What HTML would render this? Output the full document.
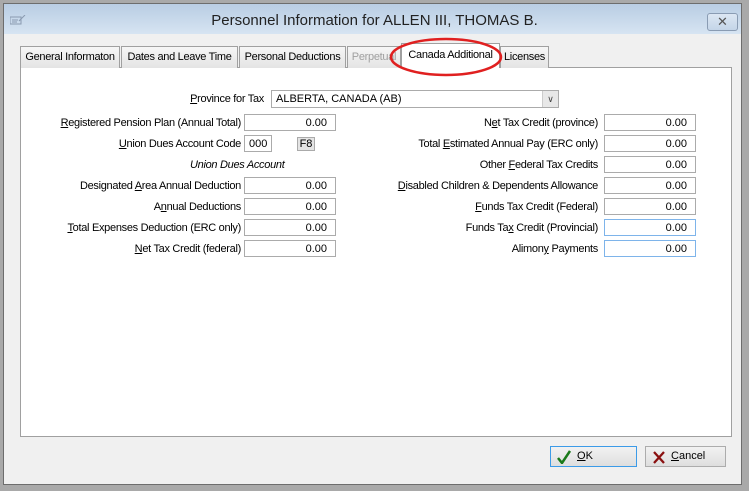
<!DOCTYPE html><html><head><style>
*{box-sizing:border-box;margin:0;padding:0}
body{width:749px;height:491px;background:#fff;font-family:"Liberation Sans",sans-serif;font-size:11px;color:#000;position:relative;overflow:hidden}
.abs{position:absolute}
.frame{left:0;top:0;width:749px;height:491px;background:#a9a9a9}
.win{left:3px;top:3px;width:739px;height:482px;background:#f0f0f0;border:1px solid #6d6d6d}
.title{left:4px;top:4px;width:737px;height:30px;background:linear-gradient(#b9cde3,#d6e4f2)}
.tab{position:absolute;top:46px;height:22px;border:1px solid #a0a0a0;border-bottom:none;background:linear-gradient(#f6f6f6,#e4e4e4);text-align:center;line-height:20px;letter-spacing:-0.3px;white-space:nowrap;overflow:hidden}
.panel{left:20px;top:67px;width:712px;height:370px;background:#fff;border:1px solid #a0a0a0}
.lbl{position:absolute;text-align:right;letter-spacing:-0.3px;white-space:nowrap;line-height:18px}
.in{position:absolute;width:92px;height:17px;border:1px solid #ababab;background:#fff;text-align:right;padding-right:8px;line-height:16px}
.blue{border-color:#7eb4ea}
.btn{position:absolute;top:446px;height:21px;border:1px solid #acacac;background:linear-gradient(#f2f2f2,#dedede);line-height:19px}
</style></head><body>
<div class="abs frame"></div>
<div class="abs win"></div>
<div class="abs title"></div>
<svg class="abs" style="left:10px;top:15px" width="16" height="10"><rect x="0" y="2" width="11" height="7" fill="none" stroke="#8a9ab0"/><path d="M2 5h6M2 7h5M9 6l6-6" stroke="#8a9ab0"/></svg>
<div class="abs" style="left:0;width:749px;top:12px;text-align:center;font-size:15px;color:#222">Personnel Information for ALLEN III, THOMAS B.</div>
<div class="abs" style="left:707px;top:13px;width:31px;height:18px;border:1px solid #8a9cb3;border-radius:3px;background:linear-gradient(#dce7f3,#c4d5e8);text-align:center;color:#555;font-size:13px;line-height:15px">✕</div>
<div class="abs panel"></div>
<div class="tab" style="left:20px;width:100px">General Informaton</div>
<div class="tab" style="left:121px;width:117px">Dates and Leave Time</div>
<div class="tab" style="left:239px;width:107px">Personal Deductions</div>
<div class="tab" style="left:347px;width:54px;color:#a0a0a0">Perpetual</div>
<div class="tab" style="left:500px;width:49px">Licenses</div>
<div class="tab" style="left:401px;width:99px;top:43px;height:25px;background:#fff;line-height:22px">Canada Additional</div>
<svg class="abs" style="left:388px;top:36px" width="120" height="44"><ellipse cx="58" cy="21" rx="55" ry="18" fill="none" stroke="#e02020" stroke-width="2.5"/></svg>
<div class="lbl" style="left:150px;width:114px;top:90px"><u>P</u>rovince for Tax</div>
<div class="abs" style="left:271px;top:90px;width:288px;height:18px;border:1px solid #ababab;background:#fff;padding-left:4px;line-height:17px">ALBERTA, CANADA (AB)</div>
<div class="abs" style="left:542px;top:91px;width:16px;height:16px;background:#e8e8e8;border-left:1px solid #ccc;text-align:center;font-size:9px;line-height:16px;color:#444">∨</div>

<div class="lbl" style="left:0;width:241px;top:114px"><u>R</u>egistered Pension Plan (Annual Total)</div><div class="in" style="left:244px;top:114px">0.00</div>
<div class="lbl" style="left:0;width:241px;top:135px"><u>U</u>nion Dues Account Code</div><div class="in" style="left:244px;top:135px;width:28px;text-align:left;padding-left:4px">000</div>
<div class="abs" style="left:297px;top:137px;width:18px;height:14px;border:1px solid #aaa;background:#e4e4e4;text-align:center;line-height:12px">F8</div>
<div class="lbl" style="left:190px;top:156px;font-style:italic">Union Dues Account</div>
<div class="lbl" style="left:0;width:241px;top:177px">Designated <u>A</u>rea Annual Deduction</div><div class="in" style="left:244px;top:177px">0.00</div>
<div class="lbl" style="left:0;width:241px;top:198px">A<u>n</u>nual Deductions</div><div class="in" style="left:244px;top:198px">0.00</div>
<div class="lbl" style="left:0;width:241px;top:219px"><u>T</u>otal Expenses Deduction (ERC only)</div><div class="in" style="left:244px;top:219px">0.00</div>
<div class="lbl" style="left:0;width:241px;top:240px"><u>N</u>et Tax Credit (federal)</div><div class="in" style="left:244px;top:240px">0.00</div>

<div class="lbl" style="left:340px;width:258px;top:114px">N<u>e</u>t Tax Credit (province)</div><div class="in" style="left:604px;top:114px">0.00</div>
<div class="lbl" style="left:340px;width:258px;top:135px">Total <u>E</u>stimated Annual Pay (ERC only)</div><div class="in" style="left:604px;top:135px">0.00</div>
<div class="lbl" style="left:340px;width:258px;top:156px">Other <u>F</u>ederal Tax Credits</div><div class="in" style="left:604px;top:156px">0.00</div>
<div class="lbl" style="left:340px;width:258px;top:177px"><u>D</u>isabled Children &amp; Dependents Allowance</div><div class="in" style="left:604px;top:177px">0.00</div>
<div class="lbl" style="left:340px;width:258px;top:198px"><u>F</u>unds Tax Credit (Federal)</div><div class="in" style="left:604px;top:198px">0.00</div>
<div class="lbl" style="left:340px;width:258px;top:219px">Funds Ta<u>x</u> Credit (Provincial)</div><div class="in blue" style="left:604px;top:219px">0.00</div>
<div class="lbl" style="left:340px;width:258px;top:240px">Alimon<u>y</u> Payments</div><div class="in blue" style="left:604px;top:240px">0.00</div>

<div class="btn" style="left:550px;width:87px;border-color:#3c9be8"><svg class="abs" style="left:6px;top:3px" width="14" height="14"><path d="M1 8l4 5 8-12" fill="none" stroke="#1a7a1a" stroke-width="2.5"/></svg><span class="abs" style="left:26px"><u>O</u>K</span></div>
<div class="btn" style="left:645px;width:81px"><svg class="abs" style="left:6px;top:4px" width="14" height="13"><path d="M2 1l10 11M12 1L2 12" stroke="#8a1010" stroke-width="2.3"/></svg><span class="abs" style="left:25px"><u>C</u>ancel</span></div>
</body></html>
